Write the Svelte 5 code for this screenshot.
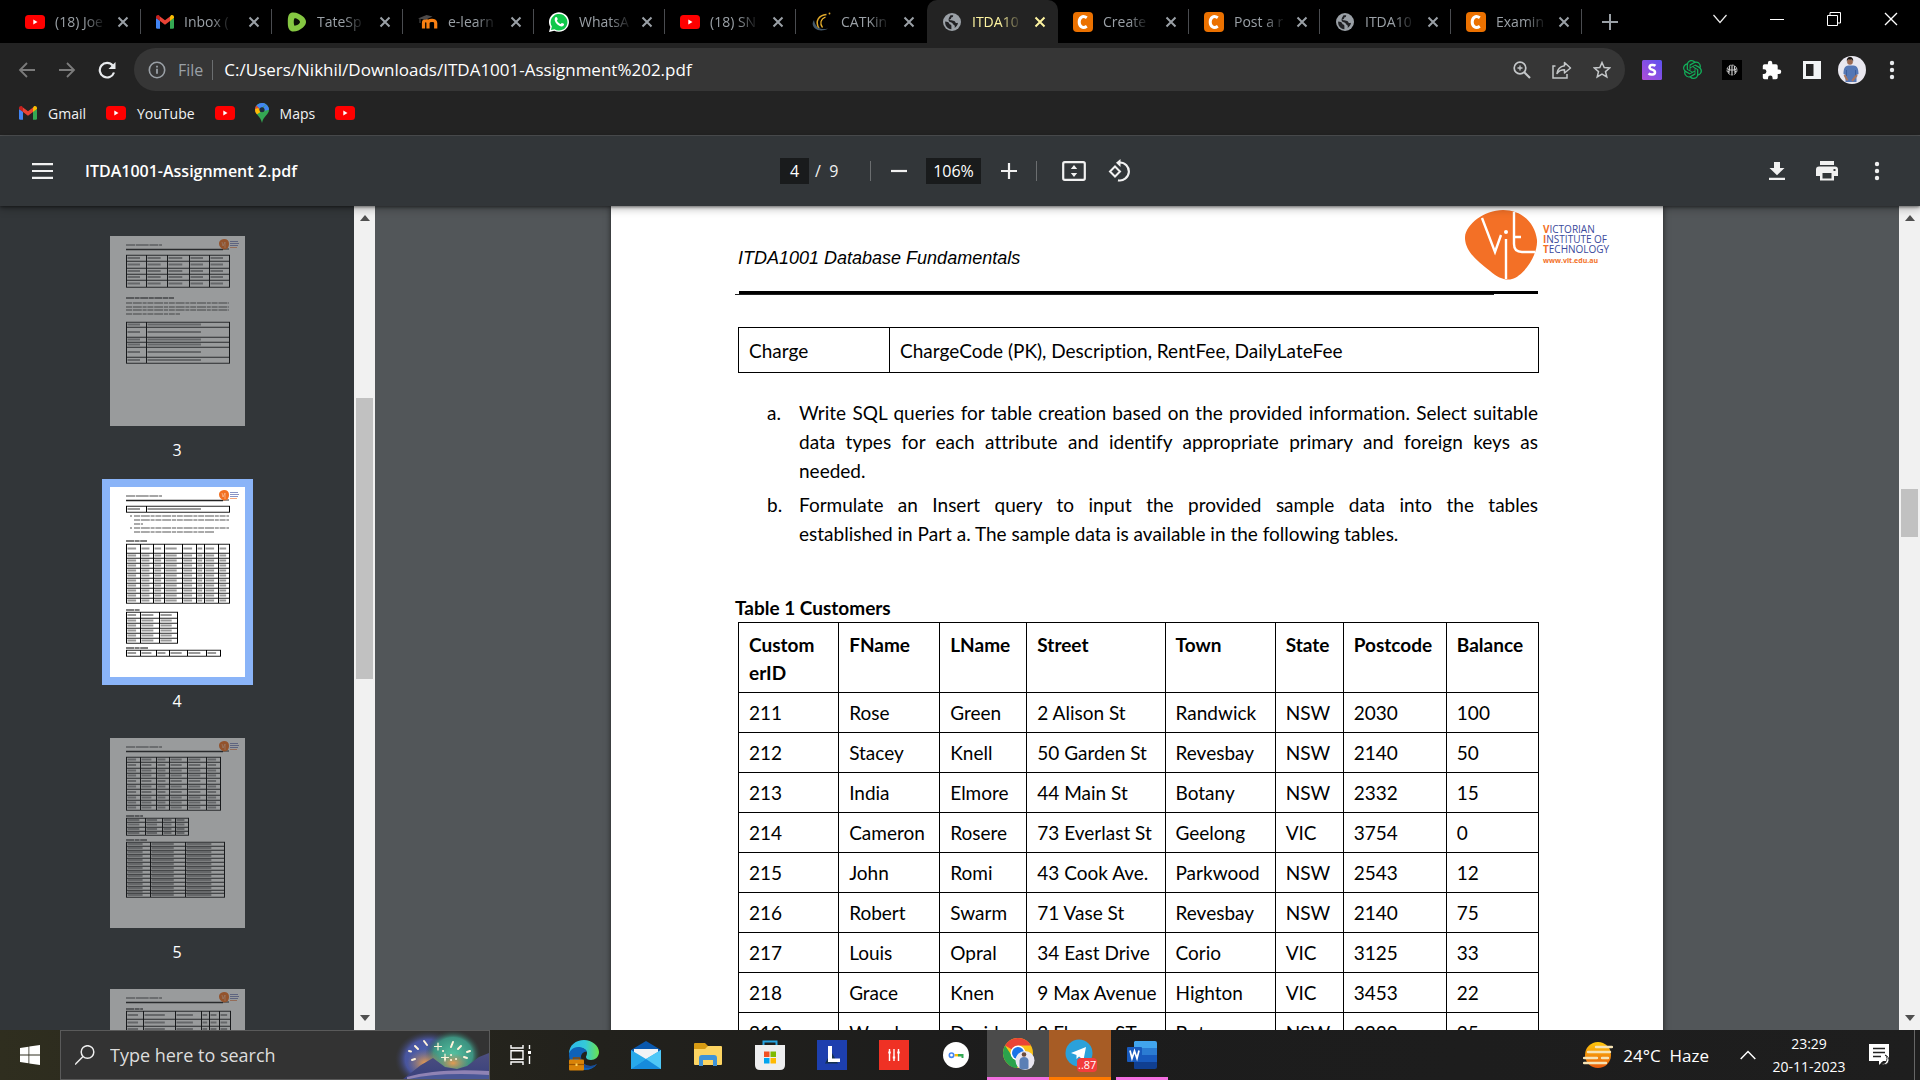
<script>
  const tabs = [
    { icon: 'youtube', title: '(18) Joe' },
    { icon: 'gmail', title: 'Inbox (' },
    { icon: 'rumble', title: 'TateSp' },
    { icon: 'moodle', title: 'e-learn' },
    { icon: 'whatsapp', title: 'WhatsA' },
    { icon: 'youtube', title: '(18) SN' },
    { icon: 'catking', title: 'CATKin' },
    { icon: 'globe', title: 'ITDA10', active: true },
    { icon: 'chegg', title: 'Create' },
    { icon: 'chegg', title: 'Post a r' },
    { icon: 'globe', title: 'ITDA10' },
    { icon: 'chegg', title: 'Examin' }
  ];

  const bookmarks = [
    { icon: 'gmail', title: 'Gmail' },
    { icon: 'youtube', title: 'YouTube' },
    { icon: 'youtube', title: '' },
    { icon: 'maps', title: 'Maps' },
    { icon: 'youtube', title: '' }
  ];

  const columns = ['CustomerID', 'FName', 'LName', 'Street', 'Town', 'State', 'Postcode', 'Balance'];
  const customers = [
    ['211', 'Rose', 'Green', '2 Alison St', 'Randwick', 'NSW', '2030', '100'],
    ['212', 'Stacey', 'Knell', '50 Garden St', 'Revesbay', 'NSW', '2140', '50'],
    ['213', 'India', 'Elmore', '44 Main St', 'Botany', 'NSW', '2332', '15'],
    ['214', 'Cameron', 'Rosere', '73 Everlast St', 'Geelong', 'VIC', '3754', '0'],
    ['215', 'John', 'Romi', '43 Cook Ave.', 'Parkwood', 'NSW', '2543', '12'],
    ['216', 'Robert', 'Swarm', '71 Vase St', 'Revesbay', 'NSW', '2140', '75'],
    ['217', 'Louis', 'Opral', '34 East Drive', 'Corio', 'VIC', '3125', '33'],
    ['218', 'Grace', 'Knen', '9 Max Avenue', 'Highton', 'VIC', '3453', '22'],
    ['219', 'Wendy', 'David', '3 Flower ST', 'Botany', 'NSW', '2332', '25']
  ];

  // Thumbnail previews: grids as column and row edges, text as [x1, x2, y].
  const thumbs = [
    {
      n: 3,
      grids: [
        { xs: [16, 36, 57, 79, 99, 119], ys: [19, 25, 32, 38, 44, 51] },
        { xs: [16, 36, 119], ys: [86, 91, 101, 106, 111, 121, 127] }
      ],
      lines: [[16, 119, 67], [16, 119, 71], [16, 119, 74], [16, 70, 78]],
      heads: [[16, 64, 62]]
    },
    {
      n: 4,
      grids: [
        { xs: [16, 36, 119], ys: [19, 25] },
        { xs: [16, 30, 43, 54, 72, 86, 94, 108, 119], ys: [57, 66, 71, 76, 81, 86, 91, 96, 101, 106, 111, 116] },
        { xs: [16, 30, 49, 67], ys: [125, 131, 136, 141, 146, 151, 156] },
        { xs: [16, 30, 46, 59, 77, 96, 110], ys: [163, 169] }
      ],
      lines: [[20, 22, 29], [24, 119, 29], [24, 119, 33], [24, 33, 37], [20, 22, 41], [24, 119, 41], [24, 104, 45]],
      heads: [[16, 37, 54], [16, 30, 123], [16, 38, 161]]
    },
    {
      n: 5,
      grids: [
        { xs: [16, 30, 46, 59, 77, 96, 110], ys: [19, 24, 30, 35, 40, 46, 51, 57, 62, 67, 72] },
        { xs: [16, 35, 52, 65, 78], ys: [80, 84, 89, 93, 97] },
        { xs: [16, 40, 75, 114], ys: [104, 108, 112, 116, 120, 124, 128, 132, 136, 140, 144, 148, 152, 155, 159] }
      ],
      lines: [],
      heads: [[16, 33, 78], [16, 37, 102]]
    },
    {
      n: 6,
      grids: [{ xs: [16, 33, 65, 91, 99, 109, 120], ys: [22, 30, 37, 43, 49, 55, 61] }],
      lines: [],
      heads: [[16, 33, 20]]
    }
  ];

  const apps = [
    ['taskview', 'Task View'],
    ['edge', 'Microsoft Edge'],
    ['mail', 'Mail'],
    ['folder', 'File Explorer'],
    ['store', 'Microsoft Store'],
    ['lapp', 'L'],
    ['mixer', 'Mixer'],
    ['key', 'Password Manager'],
    ['chrome', 'Google Chrome'],
    ['telegram', 'Telegram'],
    ['word', 'Word']
  ];

  let page = $state('4');
  let zoom = $state('106%');
  let url = $state('C:/Users/Nikhil/Downloads/ITDA1001-Assignment%202.pdf');
</script>

{#snippet icon(name)}
  {#if name === 'youtube'}
    <svg width="20" height="20" viewBox="0 0 20 20"><rect y="3" width="20" height="14" rx="3.5" fill="#f00" /><path d="M8.3 7.4v5.2l4.2-2.6z" fill="#fff" /></svg>
  {:else if name === 'gmail'}
    <svg width="18" height="18" viewBox="0 0 18 18"><path d="M0 5v9.500a1.300 1.300 0 0 0 1.300 1.300H4V7.500z" fill="#4285f4" /><path d="M14 7.500v8.300h2.700a1.300 1.300 0 0 0 1.300-1.300V5z" fill="#34a853" /><path d="M14 3.500v4.500l4-3V4c0-1.900-2-2.600-3.200-1.600z" fill="#fbbc04" /><path d="M4 8V3.500l5 3.800 5-3.800V8l-5 3.800z" fill="#ea4335" /><path d="M0 4v1l4 3V3.500l-.8-1.100C2 1.500 0 2.200 0 4z" fill="#c5221f" /></svg>
  {:else if name === 'rumble'}
    <svg width="20" height="20" viewBox="0 0 20 20"><path d="M5 .6C9 0 13 2 16 4.600c4 3.400 4 7.400 0 10.800-3 2.600-7 4.500-11 4C1 18 .8 14 .8 10S1 1.500 5 .6z" fill="#85c742" /><path d="M7.500 6.300c2-.2 5.500 2 5.500 3.700s-3.500 3.900-5.500 3.700c-1-1.300-1-6 0-7.400z" fill="#0b0f06" /></svg>
  {:else if name === 'moodle'}
    <svg width="20" height="20" viewBox="0 0 20 20"><path d="M5.500 16.500V11c0-3.200 4.500-3.200 4.500 0v5.500M10 11c0-3.200 7.700-4 7.700 0v5.500" fill="none" stroke="#f98012" stroke-width="3.200" /><path d="M0 6.500 8.500 3l6 1.500-7 3.300z" fill="#4d4a4a" /><path d="M2 6.500V11" stroke="#555" /></svg>
  {:else if name === 'whatsapp'}
    <svg width="20" height="20" viewBox="0 0 20 20"><path d="M0 20l1.300-5A10 9.800 0 1 1 5.200 18.700z" fill="#fff" /><path d="M1.900 18.100l1-3.500A8.400 8.300 0 1 1 5.500 17.200z" fill="#10c84a" /><path d="M6.500 5.300c.6-.6 1.300-.4 1.600.3l.6 1.500c.2.600-.9 1.300-.7 1.700.6 1.400 1.700 2.500 3.300 3.200.5.200 1.200-1.300 1.700-1.100l1.800.9c.5.300.2 1.500-.4 2-1.800 1.500-4.500.1-6.300-1.600S4.700 7.500 6.500 5.300z" fill="#fff" /></svg>
  {:else if name === 'catking'}
    <svg width="20" height="20" viewBox="0 0 20 20" fill="none"><path d="M15.500 2.500C8 3 3.500 9 8 16.500" stroke="#e0a92c" stroke-width="1.500" /><path d="M14.500 5C9.500 7 8.500 12 11.500 15.500" stroke="#f3b72e" stroke-width="1.200" /><circle cx="18.500" cy="1.500" r=".9" fill="#e0a92c" /><path d="M3 8c-5 7 5 14 14 8.500C9 18.500 4 15 3 8z" fill="#44596b" /></svg>
  {:else if name === 'globe'}
    <svg width="20" height="20" viewBox="0 0 20 20"><circle cx="10" cy="10" r="9" fill="#9aa0a6" /><path d="M3.200 9.500c2 .2 3.600.5 4 2 .3 1.200 2.200.8 2.200 2.200v3.500C5.500 17 2.700 13.600 3.200 9.500zM8.500 3.200h2.700c0 1.500-.7 2.200-2 2.300.2 1.200-.6 1.900-2 1.900 1 1.300 5.300.4 6 2.500.4 1.200 1.400 1.300 2.800.8-.3 2.300-1.600 4.200-3.500 5.400.8-1.700.3-3.200-1.300-3.700-1-2.700-4-1.800-4.500-3.600C6 6.500 7.700 5 8.500 3.200z" fill="#202124" /></svg>
  {:else if name === 'chegg'}
    <svg width="20" height="20" viewBox="0 0 20 20"><rect width="20" height="20" rx="4" fill="#eb7100" /><path d="M13.800 5.800C9.500 2.800 6.200 5.800 6.200 10s3.300 7.200 7.600 4.200" fill="none" stroke="#fff" stroke-width="3" /></svg>
  {:else if name === 'maps'}
    <svg width="14" height="20" viewBox="0 0 14 20"><path d="M7 0C3 0 0 3 0 6.800 0 11.500 5.500 13 7 20 8.500 13 14 11.500 14 6.800 14 3 11 0 7 0z" fill="#34a853" /><path d="M7 0C4.700 0 2.800 1 1.500 2.600L5 6l6.200-4.600C10 .5 8.600 0 7 0z" fill="#4285f4" /><path d="M1.500 2.600C.3 4 0 5.500 0 6.800 0 8.700.9 10.100 2 11.300L5.500 7z" fill="#ea4335" /><path d="M2 11.300C.5 9.700 0 8 .2 6l3-1 2.400 4z" fill="#fbbc04" /><path d="M11.200 1.400C13 2.800 14 4.700 14 6.800l-4 1L8.500 4.500z" fill="#4285f4" /><circle cx="7" cy="6.800" r="2.500" fill="#1d2c40" /></svg>
  {:else if name === 'taskview'}
    <svg width="22" height="20" viewBox="0 0 22 20" fill="none" stroke="#fff" stroke-width="1.400"><path d="M1 0v3h12V0M1 20v-3h12v3M1 5.700h12v8.600H1zM19.500 0v4M19.500 11v8" /><path d="M18 6h3v3h-3z" fill="#fff" stroke="none" /></svg>
  {:else if name === 'edge'}
    <svg width="32" height="32" viewBox="0 0 32 32"><defs><linearGradient id="eg" x1="0" x2="1"><stop offset="0" stop-color="#2bb8ee" /><stop offset=".55" stop-color="#35c9d8" /><stop offset="1" stop-color="#6be34c" /></linearGradient></defs><path d="M1 15C1 6 8 1 16 1s15 6 15 12c0 5-4 8-8 8-3 0-5-1-5-3 0-1 1-2 1-4 0-3-3-5-7-5S2 12 1 15z" fill="url(#eg)" /><path d="M1 16c0-4 4-8 9-8 4 0 8 2 9 5-3-1-6 2-6 5 0 6 5 9 10 9 2 0 4-1 6-2-3 4-7 6-12 6C8 31 1 25 1 16z" fill="#0f62b8" /><path d="M13 18c0 6 5 9 9 9 3 0 5-1 7-2-4 6-16 5-18-1-1-3 0-5 2-6z" fill="#1b4a93" /><path d="M5.500 21v-2h6v2" fill="none" stroke="#8a4b04" stroke-width="1.500" /><rect x="1" y="20.500" width="15" height="11" rx="1" fill="#d98308" /><path d="M1 25.500h15" stroke="#9b5400" stroke-width="1.200" /><rect x="7.500" y="24.500" width="2" height="2.500" fill="#ffd35a" /></svg>
  {:else if name === 'mail'}
    <svg width="32" height="28" viewBox="0 0 32 28"><path d="M1 9 16 0l15 9v3H1z" fill="#0a58ad" /><path d="M4 8h24v12H4z" fill="#f1f3f5" /><path d="M1 9l15 9L31 9v19H1z" fill="#27a9ea" /><path d="M31 9v19H1l15-10z" fill="#4fc8f7" /><path d="M1 28l15-10 15 10z" fill="#168bdc" /></svg>
  {:else if name === 'folder'}
    <svg width="28" height="24" viewBox="0 0 28 24"><path d="M0 1q0-1 1-1h10l3 3v5H0z" fill="#d79b13" /><path d="M0 6h11l3-3h13q1 0 1 1v17q0 1-1 1H1q-1 0-1-1z" fill="#fcd462" /><path d="M5 23v-8q0-3 3-3h12q3 0 3 3v8h-4v-6H9v6z" fill="#3f93d8" /></svg>
  {:else if name === 'store'}
    <svg width="30" height="30" viewBox="0 0 30 30"><path d="M8.500 6V1.500h13V6" fill="none" stroke="#27a5e3" stroke-width="2" /><path d="M0 5h30v20q0 5-5 5H5q-5 0-5-5z" fill="#eeeeef" /><path d="M9 11.500h5.500V17H9z" fill="#f25022" /><path d="M15.500 11.500H21V17h-5.500z" fill="#7fba00" /><path d="M9 18h5.500v5.500H9z" fill="#00a4ef" /><path d="M15.500 18H21v5.500h-5.500z" fill="#ffb900" /></svg>
  {:else if name === 'lapp'}
    <svg width="30" height="30" viewBox="0 0 30 30"><path d="M0 0h30v30H0z" fill="#1d3fae" /><path d="M11 6v12l-3 5.500h13z" fill="#14304d" /><path d="M11 6h4v12.500h8V22H11z" fill="#fff" /></svg>
  {:else if name === 'mixer'}
    <svg width="30" height="30" viewBox="0 0 30 30"><path d="M0 0h30v30H0z" fill="#ef3124" /><path d="M10.500 9v12M15 9v12M19.500 9v12" stroke="#fff" stroke-width="1.400" /><path d="M9.300 12.500h2.400M13.800 17.500h2.400M18.300 12.500h2.400" stroke="#fff" stroke-width="2" /></svg>
  {:else if name === 'key'}
    <svg width="26" height="26" viewBox="0 0 26 26"><circle cx="13" cy="13" r="13" fill="#fff" /><path d="M11.500 12h4v2.400h-4z" fill="#fbbc04" /><path d="M15 12h5.500v4h-2v-1.500H15z" fill="#34a853" /><circle cx="8.500" cy="13.200" r="2.200" fill="none" stroke="#4285f4" stroke-width="1.600" /></svg>
  {:else if name === 'chrome'}
    <svg width="34" height="34" viewBox="0 0 34 34"><circle cx="17" cy="16" r="15" fill="#fbc116" /><path d="M17 16 4 8.500A15 15 0 0 1 30 8.500H17z" fill="#ea4335" /><path d="M4 8.500A15 15 0 0 0 16 31l6.500-11.500L17 16 11 19z" fill="#2ba24c" /><circle cx="17" cy="16" r="7.500" fill="#fff" /><circle cx="17" cy="16" r="6" fill="#1a73e8" /><circle cx="24" cy="23.500" r="9.500" fill="#e9e6f0" /><circle cx="23" cy="17.500" r="2.300" fill="#6a4a3c" /><path d="M18.500 31.500v-8q.5-3.500 4.500-3.500t4.500 3.500v8q-4.500 2-9 0z" fill="#5b7fb5" /></svg>
  {:else if name === 'telegram'}
    <svg width="34" height="34" viewBox="0 0 34 34"><circle cx="16" cy="16" r="13.500" fill="#2ba1da" /><path d="M8 16 23 10l-2.500 13-4.500-3.500-2.500 2.500v-4z" fill="#fff" /></svg>
  {:else if name === 'word'}
    <svg width="30" height="28" viewBox="0 0 30 28"><path d="M8 0h20q2 0 2 2v5H7V1z" fill="#41a5ee" /><path d="M7 7h23v7H7z" fill="#2b7cd3" /><path d="M7 14h23v7H7z" fill="#185abd" /><path d="M7 21h23v5q0 2-2 2H8q-1 0-1-1z" fill="#103f91" /><rect y="6" width="15" height="15" rx="1" fill="#185abd" /><path d="M3 9.500l2 8 2.500-7.500L10 17.500l2-8" fill="none" stroke="#fff" stroke-width="1.700" /></svg>
  {/if}
{/snippet}

{#snippet cross(size)}
  <svg width={size} height={size} viewBox="0 0 12 12"><path d="M1.500 1.500l9 9M10.500 1.500l-9 9" stroke="currentColor" stroke-width={size > 12 ? 1 : 2} fill="none" /></svg>
{/snippet}

{#snippet dots()}
  <svg width="6" height="20" viewBox="0 0 6 20" fill="currentColor"><circle cx="3" cy="3" r="2.200" /><circle cx="3" cy="10" r="2.200" /><circle cx="3" cy="17" r="2.200" /></svg>
{/snippet}

{#snippet avatar()}
  <svg width="28" height="28" viewBox="0 0 28 28"><defs><clipPath id="face"><circle cx="14" cy="14" r="14" /></clipPath></defs><g clip-path="url(#face)"><path d="M0 0h28v28H0z" fill="#e9e7ef" /><path d="M5.500 18c0-5 1-8 5-8.500h5c4 .5 5 3.500 5 8.500l-2 1v7h-11v-7z" fill="#5577b5" /><path d="M8.500 14v6M17.500 14v6" stroke="#3c5f9d" fill="none" /><circle cx="12" cy="5.800" r="2.900" fill="#9b6a52" /><path d="M8.800 5.500Q8.500 1 12 1t3.200 4.500L14 3.500h-4z" fill="#17120f" /><path d="M6.500 19l3 5.500M19 19l-5 6" stroke="#a87660" stroke-width="2" fill="none" /></g></svg>
{/snippet}

{#snippet triangle(up)}
  <svg width="10" height="6" viewBox="0 0 10 6"><path d={up ? 'M5 0l5 6H0z' : 'M0 0h10L5 6z'} fill="#505050" /></svg>
{/snippet}

<div class="screen">
  <header class="tabstrip">
    <div class="tabs" role="tablist">
      {#each tabs as t}
        <div class="tab" class:active={t.active}>
          <button class="tab-main" role="tab" aria-selected={!!t.active}>
            {@render icon(t.icon)}
            <span class="tab-title">{t.title}</span>
          </button>
          <button class="tab-close" aria-label="Close tab">{@render cross(12)}</button>
        </div>
      {/each}
    </div>
    <button class="newtab" aria-label="New tab"><svg width="16" height="16" viewBox="0 0 16 16"><path d="M8 0v16M0 8h16" stroke="#9aa0a6" stroke-width="2" /></svg></button>
    <div class="window">
      <button aria-label="Search tabs"><svg width="14" height="10" viewBox="0 0 14 10"><path d="M.5 1 7 8.500 13.500 1" fill="none" stroke="#eee" stroke-width="1.200" /></svg></button>
      <button aria-label="Minimize"><svg width="14" height="10" viewBox="0 0 14 10"><path d="M0 5.500h14" stroke="#fff" /></svg></button>
      <button aria-label="Restore"><svg width="14" height="14" viewBox="0 0 14 14"><path d="M.5 3.500h10v10H.5zM3 3.500V.5h10.500v10.500h-3" fill="none" stroke="#fff" /></svg></button>
      <button aria-label="Close">{@render cross(16)}</button>
    </div>
  </header>

  <nav class="toolbar" aria-label="Navigation">
    <div class="nav">
      <button class="dim" aria-label="Back"><svg width="18" height="16" viewBox="0 0 18 16"><path d="M17 8H2M9 1 2 8l7 7" fill="none" stroke="currentColor" stroke-width="1.800" /></svg></button>
      <button class="dim" aria-label="Forward"><svg width="18" height="16" viewBox="0 0 18 16"><path d="M1 8h15M9 1l7 7-7 7" fill="none" stroke="currentColor" stroke-width="1.800" /></svg></button>
      <button aria-label="Reload"><svg width="18" height="18" viewBox="0 0 18 18"><path d="M16 11.500A7.300 7.300 0 1 1 14.700 4.500" fill="none" stroke="currentColor" stroke-width="2.200" /><path d="M17.500 1v7h-7z" fill="currentColor" /></svg></button>
    </div>
    <div class="omnibox">
      <svg width="18" height="18" viewBox="0 0 18 18"><circle cx="9" cy="9" r="7.700" fill="none" stroke="#9aa0a6" stroke-width="1.600" /><path d="M9 7.800v5M9 4.700v1.800" stroke="#9aa0a6" stroke-width="1.800" /></svg>
      <span class="scheme">File</span>
      <span class="bar"></span>
      <input class="url" aria-label="Address" bind:value={url} />
      <button aria-label="Zoom"><svg width="18" height="18" viewBox="0 0 18 18"><circle cx="7" cy="7" r="5.800" fill="none" stroke="currentColor" stroke-width="1.700" /><path d="M11 11l6 6" stroke="currentColor" stroke-width="2.200" /><path d="M7 4.500v5M4.500 7h5" stroke="currentColor" stroke-width="1.300" /></svg></button>
      <button aria-label="Share"><svg width="20" height="18" viewBox="0 0 20 18"><path d="M3.500 5H1v12h14v-4" fill="none" stroke="currentColor" stroke-width="1.500" /><path d="M12.500 1.500 18.500 7l-6 5V8.800c-3.500 0-5.700 1-7.500 3.700.5-4.200 3-7 7.500-7.700z" fill="none" stroke="currentColor" stroke-width="1.500" stroke-linejoin="round" /></svg></button>
      <button aria-label="Bookmark"><svg width="18" height="18" viewBox="0 0 18 18"><path d="M9 1.500l2.200 5 5.500.5-4.200 3.600 1.300 5.400L9 13.200 4.200 16l1.300-5.400L1.300 7l5.500-.5z" fill="none" stroke="currentColor" stroke-width="1.500" /></svg></button>
    </div>
    <div class="extensions">
      <button aria-label="Scribe"><svg width="20" height="20" viewBox="0 0 20 20"><defs><linearGradient id="sg" x1="0" y1="1" x2="1" y2="0"><stop offset="0" stop-color="#b04cd8" /><stop offset="1" stop-color="#5b52f0" /></linearGradient></defs><rect width="20" height="20" rx="1.500" fill="url(#sg)" /><path d="M13.500 5.800C12 4.500 7.500 4.300 7.500 7.200c0 3 5.500 2 5.500 5 0 3-4.700 2.800-6.500 1.300" fill="none" stroke="#fff" stroke-width="2.500" /></svg></button>
      <button aria-label="ChatGPT"><svg width="19" height="19" viewBox="0 0 24 24" fill="#12b05a"><path d="M22.2819 9.8211a5.9847 5.9847 0 0 0-.5157-4.9108 6.0462 6.0462 0 0 0-6.5098-2.9A6.0651 6.0651 0 0 0 4.9807 4.1818a5.9847 5.9847 0 0 0-3.9977 2.9 6.0462 6.0462 0 0 0 .7427 7.0966 5.98 5.98 0 0 0 .511 4.9107 6.051 6.051 0 0 0 6.5146 2.9001A5.9847 5.9847 0 0 0 13.2599 24a6.0557 6.0557 0 0 0 5.7718-4.2058 5.9894 5.9894 0 0 0 3.9977-2.9001 6.0557 6.0557 0 0 0-.7475-7.0729zm-9.022 12.6081a4.4755 4.4755 0 0 1-2.8764-1.0408l.1419-.0804 4.7783-2.7582a.7948.7948 0 0 0 .3927-.6813v-6.7369l2.02 1.1686a.071.071 0 0 1 .038.052v5.5826a4.504 4.504 0 0 1-4.4945 4.4944zm-9.6607-4.1254a4.4708 4.4708 0 0 1-.5346-3.0137l.142.0852 4.783 2.7582a.7712.7712 0 0 0 .7806 0l5.8428-3.3685v2.3324a.0804.0804 0 0 1-.0332.0615L9.74 19.9502a4.4992 4.4992 0 0 1-6.1408-1.6464zM2.3408 7.8956a4.485 4.485 0 0 1 2.3655-1.9728V11.6a.7664.7664 0 0 0 .3879.6765l5.8144 3.3543-2.0201 1.1685a.0757.0757 0 0 1-.071 0l-4.8303-2.7865A4.504 4.504 0 0 1 2.3408 7.872zm16.5963 3.8558L13.1038 8.364 15.1192 7.2a.0757.0757 0 0 1 .071 0l4.8303 2.7913a4.4944 4.4944 0 0 1-.6765 8.1042v-5.6772a.79.79 0 0 0-.407-.667zm2.0107-3.0231l-.142-.0852-4.7735-2.7818a.7759.7759 0 0 0-.7854 0L9.409 9.2297V6.8974a.0662.0662 0 0 1 .0284-.0615l4.8303-2.7866a4.4992 4.4992 0 0 1 6.6802 4.66zM8.3065 12.863l-2.02-1.1638a.0804.0804 0 0 1-.038-.0567V6.0742a4.4992 4.4992 0 0 1 7.3757-3.4537l-.142.0805L8.704 5.459a.7948.7948 0 0 0-.3927.6813zm1.0976-2.3654l2.602-1.4998 2.6069 1.4998v2.9994l-2.5974 1.4997-2.6067-1.4997Z" /></svg></button>
      <button aria-label="AI assistant"><svg width="20" height="20" viewBox="0 0 20 20"><path d="M0 0h20v20H0z" fill="#000" /><path d="M10 5v10M7.500 6v3.500M12.500 6v3.500M7 10.500v3M13 10.500v3M5 8.500l2.500 1.500h5L15 8.500M5.500 12l2-1.500M14.500 12l-2-1.500" stroke="#c8c8c8" stroke-width="1.200" fill="none" /><circle cx="10" cy="10" r="5" fill="none" stroke="#a8a8a8" stroke-width="1" stroke-dasharray="2.500 .8" /></svg></button>
      <button aria-label="Extensions"><svg width="20" height="20" viewBox="0 0 20 20" fill="#fff"><path d="M17 9.500h-1.300V6a1.700 1.700 0 0 0-1.700-1.700h-3.700V3a2.200 2.200 0 0 0-4.400 0v1.300H2.500A1.700 1.700 0 0 0 .8 6v3.200h1.300a2.300 2.300 0 0 1 0 4.700H.8V17.500a1.700 1.700 0 0 0 1.700 1.700H6v-1.300a2.300 2.300 0 0 1 4.600 0v1.300H14a1.700 1.700 0 0 0 1.700-1.700V14H17a2.250 2.250 0 0 0 0-4.500z" /></svg></button>
      <button aria-label="Side panel"><svg width="20" height="20" viewBox="0 0 20 20"><path fill-rule="evenodd" d="M1 1h18v18H1zM4 4v12h7.500V4z" fill="#f1f3f4" /></svg></button>
      <button aria-label="Profile">{@render avatar()}</button>
      <button aria-label="Menu">{@render dots()}</button>
    </div>
  </nav>

  <nav class="bookmarks" aria-label="Bookmarks">
    {#each bookmarks as b}
      <a href="#bookmark" aria-label={b.title || 'YouTube'}>{@render icon(b.icon)}{#if b.title}<span>{b.title}</span>{/if}</a>
    {/each}
  </nav>

  <div class="pdfbar">
    <div class="pdf-left">
      <button aria-label="Toggle sidebar"><svg width="21" height="16" viewBox="0 0 21 16"><path d="M0 1.200h21M0 8h21M0 14.800h21" stroke="currentColor" stroke-width="2.200" /></svg></button>
      <h1>ITDA1001-Assignment 2.pdf</h1>
    </div>
    <div class="pdf-mid">
      <input class="pageno" aria-label="Page number" bind:value={page} />
      <span class="of">/&nbsp; 9</span>
      <span class="bar"></span>
      <button aria-label="Zoom out"><svg width="16" height="16" viewBox="0 0 16 16"><path d="M0 8h16" stroke="currentColor" stroke-width="2.200" /></svg></button>
      <input class="zoom" aria-label="Zoom level" bind:value={zoom} />
      <button aria-label="Zoom in"><svg width="16" height="16" viewBox="0 0 16 16"><path d="M0 8h16M8 0v16" stroke="currentColor" stroke-width="2.200" /></svg></button>
      <span class="bar"></span>
      <button class="fit" aria-label="Fit to page"><svg width="24" height="20" viewBox="0 0 24 20"><rect x="1.200" y="1.200" width="21.600" height="17.600" rx="1.500" fill="none" stroke="currentColor" stroke-width="2.200" /><path d="M12 4l3.200 4H8.800zM12 16l3.200-4H8.800z" fill="currentColor" /></svg></button>
      <button class="rotate" aria-label="Rotate"><svg width="22" height="24" viewBox="0 0 22 24"><path d="M11.500 3.500a9 9 0 1 1-1.500 17.800" fill="none" stroke="currentColor" stroke-width="2.200" /><path d="M12.500 0v8L8 3.800z" fill="currentColor" /><path d="M7 7.500l5 5-5 5-5-5z" fill="none" stroke="currentColor" stroke-width="2" /></svg></button>
    </div>
    <div class="pdf-right">
      <button aria-label="Download"><svg width="16" height="18" viewBox="0 0 16 18" fill="currentColor"><path d="M5 0h6v6h4.500L8 13.200.5 6H5zM0 15.800h16V18H0z" /></svg></button>
      <button aria-label="Print"><svg width="22" height="20" viewBox="0 0 22 20" fill="currentColor"><path d="M4 0h14v4H4z" /><path fill-rule="evenodd" d="M3 5.500h16q3 0 3 3V15h-4v4.500H4V15H0V8.500q0-3 3-3zM6.500 12v5.500h9V12zM17.500 8v2h2V8z" /></svg></button>
      <button aria-label="More actions">{@render dots()}</button>
    </div>
  </div>

  <div class="viewer">
    <aside class="sidebar">
      {#each thumbs as t}
        <button class="thumb" class:current={t.n === 4} aria-label="Page {t.n}">
          <span class="sheet">
            <svg width="135" height="190" viewBox="0 0 135 190">
              <path d="M0 0h135v190H0z" fill="#fff" />
              <path d="M16 9h36" stroke="#888" stroke-width="1.600" stroke-dasharray="9 .7 13 .7" />
              <path d="M16 13.500h97" stroke="#222" stroke-width="1.400" />
              <path d="M113 13h6" stroke="#222" stroke-width="1" />
              <path d="M114 3q5 0 5 5t-5 5.500q-5-2-5-6t5-4.500z" fill="#f37021" />
              <path d="M112 6l1 4 2-4v6" stroke="#fbd0b4" stroke-width=".6" fill="none" />
              <path d="M120 5.500h8M120 7.500h9M120 9.500h8" stroke="#8a93c4" stroke-width="1" />
              <path d="M120 11.500h7" stroke="#f5a57a" stroke-width="1" />
              {#each t.heads as [a, b, y]}<path d="M{a} {y}H{b}" stroke="#555" stroke-width="1.600" stroke-dasharray="8 .6 5 .6" />{/each}
              {#each t.lines as [a, b, y]}<path d="M{a} {y}H{b}" stroke="#aaa" stroke-width="2" stroke-dasharray="6 .8 9 .8 4 .8" />{/each}
              {#each t.grids as g}
                {#each g.ys.slice(0, -1) as y, r}
                  {#each g.xs.slice(0, -1) as x, c}
                    <path d="M{x + 1.500} {(y + g.ys[r + 1]) / 2}H{x + 1 + (g.xs[c + 1] - x) * 0.65}" stroke="#999" stroke-width="2" />
                  {/each}
                {/each}
                {#each g.ys as y}<path d="M{g.xs[0]} {y + 0.3}H{g.xs[g.xs.length - 1] + 1}" stroke="#222" stroke-width="1.100" />{/each}
                {#each g.xs as x}<path d="M{x + 0.5} {g.ys[0]}V{g.ys[g.ys.length - 1]}" stroke="#000" stroke-width="1" />{/each}
              {/each}
            </svg>
          </span>
          <span class="num">{t.n}</span>
        </button>
      {/each}
    </aside>
    <div class="scroll">
      {@render triangle(true)}
      <div class="track side"><div class="grip"></div></div>
      {@render triangle(false)}
    </div>

    <main class="canvas">
      <article class="page">
        <div class="page-head">
          <em>ITDA1001 Database Fundamentals</em>
          <svg class="logo" width="146" height="70" viewBox="0 0 146 70">
            <path d="M38 0C56 0 70 12 72 30c1 16-14 36-25 39-6 2-14-1-22-8C12 51 1 42 0 29-1 16 18 0 38 0z" fill="#f37026" />
            <path d="M17 8 30 42 36 25M41 29v40M49 2v32q0 8 8 8h13M49 27h7" fill="none" stroke="#fff" stroke-width="2.400" />
            <circle cx="41" cy="22" r="2" fill="#fff" />
            <g font-size="10" fill="#3a4a9c">
              <text x="78" y="23"><tspan class="v">V</tspan>ICTORIAN</text>
              <text x="78" y="33"><tspan class="v">I</tspan>NSTITUTE OF</text>
              <text x="78" y="43"><tspan class="v">T</tspan>ECHNOLOGY</text>
            </g>
            <text class="v www" x="78" y="53">www.vit.edu.au</text>
          </svg>
        </div>
        <div class="page-body">
          <div class="rule-top"></div>
          <div class="rule-low"></div>
          <table class="charge">
            <tbody><tr><td>Charge</td><td>ChargeCode (PK), Description, RentFee, DailyLateFee</td></tr></tbody>
          </table>
          <ol>
            <li>Write SQL queries for table creation based on the provided information. Select suitable data types for each attribute and identify appropriate primary and foreign keys as needed.</li>
            <li><span class="full">Formulate an Insert query to input the provided sample data into the tables</span> established in Part a. The sample data is available in the following tables.</li>
          </ol>
          <h2 id="t1">Table 1 Customers</h2>
          <table class="customers" aria-labelledby="t1">
            <colgroup>{#each columns as c}<col class={c} />{/each}</colgroup>
            <thead><tr>{#each columns as c}<th>{#if c === 'CustomerID'}Custom<wbr />erID{:else}{c}{/if}</th>{/each}</tr></thead>
            <tbody>
              {#each customers as row}<tr>{#each row as cell}<td>{cell}</td>{/each}</tr>{/each}
            </tbody>
          </table>
        </div>
      </article>
    </main>
    <div class="scroll">
      {@render triangle(true)}
      <div class="track main"><div class="grip"></div></div>
      {@render triangle(false)}
    </div>
  </div>

  <footer class="taskbar">
    <button class="start" aria-label="Start"><svg width="20" height="20" viewBox="0 0 20 20" fill="#fff"><path d="M0 3l8.500-1.300v7.800H0zM9.300 1.500 20 0v9.500H9.300zM0 10.400h8.500v7.900L0 17zM9.300 10.400H20V20L9.300 18.500z" /></svg></button>
    <div class="search">
      <svg width="20" height="20" viewBox="0 0 20 20"><circle cx="12.500" cy="7" r="6.300" fill="none" stroke="#eee" stroke-width="1.500" /><path d="M8 11.500 0 19.500" stroke="#eee" stroke-width="1.500" /></svg>
      <input type="text" placeholder="Type here to search" aria-label="Type here to search" />
      <svg width="94" height="48" viewBox="0 0 94 48">
        <defs>
          <radialGradient id="b1" cx=".5" cy=".5"><stop offset="0" stop-color="#4a66b8" /><stop offset=".7" stop-color="#49559e" /><stop offset="1" stop-color="#3a3c50" stop-opacity="0" /></radialGradient>
          <radialGradient id="b2" cx=".5" cy=".5"><stop offset="0" stop-color="#54c4a2" /><stop offset=".7" stop-color="#3d9280" /><stop offset="1" stop-color="#334340" stop-opacity="0" /></radialGradient>
          <radialGradient id="b3" cx=".5" cy=".5"><stop offset="0" stop-color="#e59a50" /><stop offset="1" stop-color="#a07a60" stop-opacity="0" /></radialGradient>
          <linearGradient id="hill" x2="0" y2="1"><stop offset="0" stop-color="#4d4f80" /><stop offset="1" stop-color="#38407c" /></linearGradient>
        </defs>
        <ellipse cx="34" cy="28" rx="34" ry="28" fill="url(#b1)" />
        <ellipse cx="58" cy="24" rx="28" ry="25" fill="url(#b2)" />
        <ellipse cx="30" cy="32" rx="18" ry="14" fill="url(#b3)" />
        <ellipse cx="58" cy="32" rx="16" ry="10" fill="url(#b3)" />
        <path d="M8 48 26 34 38 27l12 9 12 2 10-3 12-9 10-4v26z" fill="url(#hill)" />
        <path d="M12 46q30-9 82-6v8H12z" fill="#8f83b4" /><path d="M14 48q30-7 80-4v4z" fill="#4a5796" />
        <g stroke="#fff3da" stroke-width="2" stroke-linecap="round"><path d="M29 10l3 4M20 15l3 3M14 20l2 .5M17 29l3-1M58 11l-2 5M66 15l-3 3M75 20l-3 1M72 27l-3-1M50 28h.1M56 24h.1M61 28h.1M56 29h.1M48 20h.1" /><path d="M43 12v7M39.500 15.500h7M50 23v7M46.500 26.500h7" stroke-width="1.200" /></g>
      </svg>
    </div>
    <div class="apps">
      {#each apps as [id, label]}
        <button class="app {id}" aria-label={label}>{@render icon(id)}{#if id === 'telegram'}<span class="badge">..87</span>{/if}</button>
      {/each}
    </div>
    <div class="tray">
      <button class="weather">
        <svg width="30" height="28" viewBox="0 0 30 28"><defs><linearGradient id="sun" x2="0" y2="1"><stop offset="0" stop-color="#ffc80a" /><stop offset="1" stop-color="#e8590c" /></linearGradient></defs><circle cx="15" cy="14" r="13" fill="url(#sun)" /><g stroke="#f6e3b5" stroke-width="2.400" stroke-linecap="round"><path d="M13 6h16M5 11h22M1 17h13M19 17h6M1 22h22" /></g></svg>
        <span>24°C&nbsp; Haze</span>
      </button>
      <button class="up" aria-label="Show hidden icons"><svg width="16" height="10" viewBox="0 0 16 10"><path d="M.7 9 8 1.500 15.300 9" fill="none" stroke="#fff" stroke-width="1.500" /></svg></button>
      <button class="clock"><span>23:29</span><span>20-11-2023</span></button>
      <button class="notif" aria-label="Notifications"><svg width="22" height="22" viewBox="0 0 22 22"><path d="M0 0h20v17h-6l-4 4v-4H0z" fill="#fff" /><path d="M4 4.500h12M4 8.500h12M4 12.500h8" stroke="#222" stroke-width="1.300" /><path d="M16 11q4 3 0 8-2 1-4 0 2 3 6 1 4-4 0-8z" fill="#fff" stroke="#222" stroke-width=".9" /></svg></button>
    </div>
  </footer>
</div>

<style>
  :global(body) {
    margin: 0;
    background: #525659;
  }
  .screen {
    display: flex;
    flex-direction: column;
    height: 100vh;
    overflow: hidden;
    font-family: 'Open Sans', 'Noto Sans', sans-serif;
    font-size: 15px;
    color: #e8eaed;
  }
  button,
  input {
    font: inherit;
    color: inherit;
    background: none;
    border: 0;
    padding: 0;
    margin: 0;
    min-width: 0;
  }
  button {
    display: flex;
    align-items: center;
    justify-content: center;
    flex: none;
  }
  svg {
    display: block;
    flex: none;
  }
  a {
    color: inherit;
    text-decoration: none;
  }

  .tabstrip {
    display: flex;
    height: 43px;
    background: #000;
    flex: none;
  }
  .tabs {
    display: flex;
    flex: 0 1 1572px;
    min-width: 0;
    padding-left: 10px;
  }
  .tab {
    position: relative;
    display: flex;
    flex: 1 1 0;
    min-width: 0;
    align-items: center;
    color: #9aa0a6;
    padding: 0 12px 0 15px;
  }
  .tab::after {
    content: '';
    position: absolute;
    right: 0;
    top: 9px;
    width: 1px;
    height: 25px;
    background: #4a4c50;
  }
  .tab.active {
    background: #232323;
    border-radius: 10px 10px 0 0;
    color: #fdf3a0;
  }
  .tab.active::after,
  .tab:has(+ .active)::after {
    display: none;
  }
  .tab-main {
    flex: 1;
    justify-content: flex-start;
    gap: 10px;
    height: 100%;
  }
  .tab-title {
    white-space: nowrap;
    font-size: 14px;
    mask-image: linear-gradient(90deg, #000 60%, rgba(0, 0, 0, 0.15));
  }
  .tab-close {
    margin-left: auto;
  }
  .newtab {
    width: 56px;
  }
  .window {
    display: flex;
    margin-left: auto;
    padding-right: 1px;
  }
  .window button {
    width: 57px;
    height: 38px;
    color: #fff;
  }

  .toolbar {
    display: flex;
    align-items: center;
    height: 53px;
    flex: none;
    background: #232323;
  }
  .nav {
    display: flex;
    padding: 0 7px;
  }
  .nav button {
    width: 40px;
    height: 40px;
  }
  .nav .dim {
    color: #7b7b7b;
  }
  .omnibox {
    flex: 1;
    display: flex;
    align-items: center;
    height: 43px;
    border-radius: 22px;
    background: #363636;
    padding: 0 3px 0 14px;
    color: #c4c7c9;
  }
  .scheme {
    margin-left: 12px;
    color: #9aa0a6;
    font-size: 16px;
  }
  .bar {
    width: 1px;
    height: 20px;
    background: #6b6e70;
    flex: none;
  }
  .omnibox .bar {
    margin: 0 11px 0 9px;
  }
  .url {
    flex: 1;
    font-size: 17px;
    color: #fff;
  }
  .omnibox button {
    width: 40px;
  }
  .extensions {
    display: flex;
    padding: 0 8px 0 7px;
  }
  .extensions button {
    width: 40px;
    height: 40px;
  }

  .bookmarks {
    display: flex;
    align-items: center;
    gap: 20px;
    height: 39px;
    padding: 0 19px;
    border-bottom: 1px solid #525456;
    background: #232323;
    flex: none;
    font-size: 14px;
    color: #f1f3f4;
  }
  .bookmarks a {
    display: flex;
    align-items: center;
    gap: 11px;
    height: 34px;
    align-self: flex-start;
  }

  .pdfbar {
    display: grid;
    grid-template-columns: 1fr auto 1fr;
    align-items: center;
    height: 70px;
    flex: none;
    background: #323639;
    color: #f1f1f1;
    position: relative;
    z-index: 2;
    box-shadow: 0 1px 3px rgba(0, 0, 0, 0.5), 0 3px 8px rgba(0, 0, 0, 0.25);
  }
  .pdf-left,
  .pdf-mid,
  .pdf-right {
    display: flex;
    align-items: center;
  }
  .pdf-left {
    padding-left: 32px;
    gap: 32px;
  }
  h1 {
    margin: 0;
    font-size: 16px;
    font-weight: 600;
    line-height: 24px;
    color: #fff;
  }
  .pdf-mid input {
    height: 26px;
    background: #191b1c;
    text-align: center;
    font-size: 16px;
    color: #fff;
  }
  .pageno {
    width: 29px;
  }
  .zoom {
    width: 55px;
  }
  .of {
    width: 55px;
    margin-left: 6px;
    font-size: 16px;
  }
  .pdf-mid button {
    width: 55px;
  }
  .pdf-mid .fit {
    width: 48px;
    margin-left: 13px;
  }
  .pdf-mid .rotate {
    width: 42px;
  }
  .pdf-right {
    justify-content: flex-end;
    padding-right: 18px;
  }
  .pdf-right button {
    width: 50px;
  }

  .viewer {
    flex: 1;
    min-height: 0;
    display: flex;
  }
  .sidebar {
    width: 354px;
    flex: none;
    box-sizing: border-box;
    overflow: hidden;
    background: #323639;
    display: flex;
    flex-direction: column;
    align-items: center;
    padding-top: 22px;
  }
  .thumb {
    flex-direction: column;
    height: 251px;
    justify-content: flex-start;
  }
  .sheet {
    padding: 8px;
    opacity: 0.5;
  }
  .current .sheet {
    opacity: 1;
    background: #8ab4f8;
  }
  .num {
    margin-top: 4px;
    line-height: 24px;
    font-size: 16px;
    color: #fff;
  }
  .scroll {
    width: 21px;
    flex: none;
    box-sizing: border-box;
    display: flex;
    flex-direction: column;
    align-items: center;
    padding: 9px 2px;
    background: #f1f1f1;
  }
  .track {
    width: 100%;
    flex: 1;
    display: flex;
    flex-direction: column;
  }
  .grip {
    background: #c1c1c1;
  }
  .side::before {
    content: '';
    flex: 177;
  }
  .side .grip {
    flex: 281;
  }
  .side::after {
    content: '';
    flex: 336;
  }
  .main::before {
    content: '';
    flex: 268;
  }
  .main .grip {
    flex: 48;
  }
  .main::after {
    content: '';
    flex: 478;
  }

  .canvas {
    flex: 1;
    min-width: 0;
    overflow: hidden;
    background: #525659;
    display: flex;
    justify-content: center;
    align-items: flex-start;
  }
  .page {
    width: 1052px;
    max-width: 100%;
    background: #fff;
    color: #000;
    box-shadow: 0 0 6px rgba(0, 0, 0, 0.6);
    font-family: Lato, sans-serif;
    font-size: 19px;
    font-variant-ligatures: none;
  }
  .page-head {
    display: flex;
    justify-content: space-between;
    height: 81px;
    padding: 4px 52px 0 127px;
  }
  em {
    font: italic 18px 'Liberation Sans', Arial, sans-serif;
    line-height: 24px;
    padding-top: 36px;
  }
  .logo {
    font-family: 'Open Sans', sans-serif;
  }
  .logo .v {
    fill: #f37026;
    font-weight: 700;
  }
  .logo .www {
    font-size: 7px;
  }
  .page-body {
    padding: 0 125px 0 124px;
  }
  .rule-top {
    height: 3px;
    background: #000;
    margin-left: 4px;
  }
  .rule-low {
    height: 1px;
    background: #222;
    margin-right: 44px;
  }
  table {
    border-collapse: collapse;
    table-layout: fixed;
    width: 801px;
    margin-left: 3px;
  }
  td,
  th {
    border: 1px solid #000;
    text-align: left;
    vertical-align: top;
    padding: 6px 0 5px 10px;
    line-height: 28px;
  }
  .charge {
    margin-top: 32px;
  }
  .charge td {
    padding: 9px 0 7px 10px;
  }
  .charge td:first-child {
    width: 140px;
  }
  ol {
    margin: 25px 0 0;
    padding-left: 64px;
    list-style: none;
    counter-reset: item;
    line-height: 29px;
    text-align: justify;
  }
  li {
    position: relative;
    counter-increment: item;
    margin-bottom: 5px;
  }
  li::before {
    content: counter(item, lower-alpha) '.';
    position: absolute;
    left: -32px;
  }
  .full {
    display: block;
    text-align-last: justify;
  }
  h2 {
    margin: 46px 0 0;
    font-size: 19px;
    line-height: 28px;
  }
  th {
    height: 56px;
    padding: 8px 0 5px 10px;
  }
  td {
    height: 28px;
    white-space: nowrap;
  }
  .CustomerID {
    width: 100px;
  }
  .FName {
    width: 101px;
  }
  .LName {
    width: 87px;
  }
  .Street {
    width: 138px;
  }
  .Town {
    width: 110px;
  }
  .State {
    width: 68px;
  }
  .Postcode {
    width: 103px;
  }
  .Balance {
    width: 92px;
  }

  .taskbar {
    display: flex;
    height: 50px;
    flex: none;
    background: linear-gradient(90deg, #2f2e1f, #22211c 600px, #1c1c1c 1000px, #1e1e1e);
    position: relative;
    z-index: 3;
    color: #fff;
  }
  .start {
    width: 60px;
  }
  .search {
    width: 430px;
    flex: none;
    box-sizing: border-box;
    display: flex;
    align-items: center;
    padding-left: 14px;
    background: #333;
    border: 1px solid #5a5a5a;
  }
  .search input {
    flex: 1;
    margin-left: 15px;
    font-size: 18px;
  }
  .search input::placeholder {
    color: #ddd;
    opacity: 1;
  }
  .apps {
    display: flex;
  }
  .app {
    width: 62px;
    position: relative;
    box-sizing: border-box;
  }
  .edge {
    margin-left: 1px;
  }
  .chrome {
    background: #4b4b4b;
    border-bottom: 3px solid #f26ee0;
  }
  .telegram {
    background: #a75c25;
    border-bottom: 3px solid #ff7a00;
  }
  .word::after {
    content: '';
    position: absolute;
    bottom: 0;
    left: 5px;
    right: 5px;
    height: 3px;
    background: #f26ee0;
  }
  .badge {
    position: absolute;
    left: 28px;
    top: 28px;
    padding: 0 1px;
    border-radius: 4px;
    background: #f23c3c;
    font-size: 11px;
    line-height: 14px;
  }
  .tray {
    display: flex;
    margin-left: auto;
    padding-right: 5px;
    border-right: 1px solid #666;
    margin-right: 5px;
  }
  .weather {
    gap: 10px;
    padding-right: 20px;
    font-size: 17px;
  }
  .up {
    width: 38px;
  }
  .clock {
    width: 84px;
    flex-direction: column;
    font-size: 14px;
    line-height: 23px;
  }
  .notif {
    width: 58px;
  }
</style>
